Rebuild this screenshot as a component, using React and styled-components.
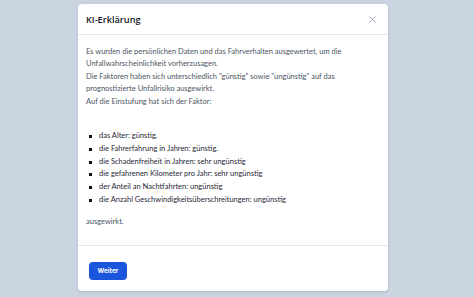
import React from "react";
import styled, { createGlobalStyle } from "styled-components";

const Global = createGlobalStyle`
  html, body { margin: 0; padding: 0; }
  body {
    background: #cbd5e1;
    font-family: "Lato", "Open Sans", sans-serif;
  }
`;

const Page = styled.div`
  width: 474px;
  height: 297px;
  display: flex;
  justify-content: center;
  align-items: flex-start;
  padding: 4px 8px 0 0;
  box-sizing: border-box;
`;

const Modal = styled.div`
  width: 310px;
  background: #fff;
  border-radius: 4px;
  box-shadow: 0 1px 3px rgba(15, 23, 42, 0.15);
  display: flex;
  flex-direction: column;
`;

const Header = styled.div`
  height: 30px;
  display: flex;
  align-items: center;
  justify-content: space-between;
  padding: 0 11px 0 8px;
  border-bottom: 1px solid #e5e7eb;
`;

const Title = styled.h3`
  margin: 0;
  font-family: "Open Sans", sans-serif;
  font-size: 9.2px;
  font-weight: 600;
  color: #111827;
`;

const Close = styled.button`
  border: 0;
  background: none;
  padding: 0;
  width: 10px;
  height: 10px;
  display: flex;
  align-items: center;
  justify-content: center;
  color: #9ca3af;
  cursor: pointer;
`;

const Body = styled.div`
  padding: 11px 8px 17px 8px;
  font-size: 7.5px;
  line-height: 12.4px;
  color: #4b5563;
  border-bottom: 1px solid #e5e7eb;
`;

const Text = styled.p`
  margin: 0;
  white-space: nowrap;
`;

const List = styled.ul`
  margin: 22px 0 9px 0;
  padding-left: 13px;
  list-style: none;
`;

const Item = styled.li`
  position: relative;
  line-height: 12.8px;
  color: #1f2937;
  &::before {
    content: "";
    position: absolute;
    left: -10px;
    top: 5px;
    width: 3px;
    height: 3px;
    background: #111;
  }
`;

const Footer = styled.div`
  padding: 11px;
`;

const Button = styled.button`
  width: 38px;
  height: 18px;
  border: 0;
  border-radius: 4px;
  background: #1a56db;
  color: #fff;
  font-family: "Inter", "Noto Sans", sans-serif;
  font-size: 6.5px;
  font-weight: 700;
  padding: 0;
`;

const factors = [
  "das Alter: günstig.",
  "die Fahrerfahrung in Jahren: günstig.",
  "die Schadenfreiheit in Jahren: sehr ungünstig",
  "die gefahrenen Kilometer pro Jahr: sehr ungünstig",
  "der Anteil an Nachtfahrten: ungünstig",
  "die Anzahl Geschwindigkeitsüberschreitungen: ungünstig",
];

export default function App() {
  return (
    <Page>
      <Global />
      <Modal>
        <Header>
          <Title>KI-Erklärung</Title>
          <Close aria-label="Schließen">
            <svg width="7" height="7" viewBox="0 0 10 10">
              <path d="M1 1L9 9M9 1L1 9" stroke="currentColor" strokeWidth="1.3" strokeLinecap="round" />
            </svg>
          </Close>
        </Header>
        <Body>
          <Text>
            Es wurden die persönlichen Daten und das Fahrverhalten ausgewertet, um die
            <br />
            Unfallwahrscheinlichkeit vorherzusagen.
            <br />
            Die Faktoren haben sich unterschiedlich "günstig" sowie "ungünstig" auf das
            <br />
            prognostizierte Unfallrisiko ausgewirkt.
            <br />
            Auf die Einstufung hat sich der Faktor:
          </Text>
          <List>
            {factors.map((f) => (
              <Item key={f}>{f}</Item>
            ))}
          </List>
          <Text>ausgewirkt.</Text>
        </Body>
        <Footer>
          <Button>Weiter</Button>
        </Footer>
      </Modal>
    </Page>
  );
}
